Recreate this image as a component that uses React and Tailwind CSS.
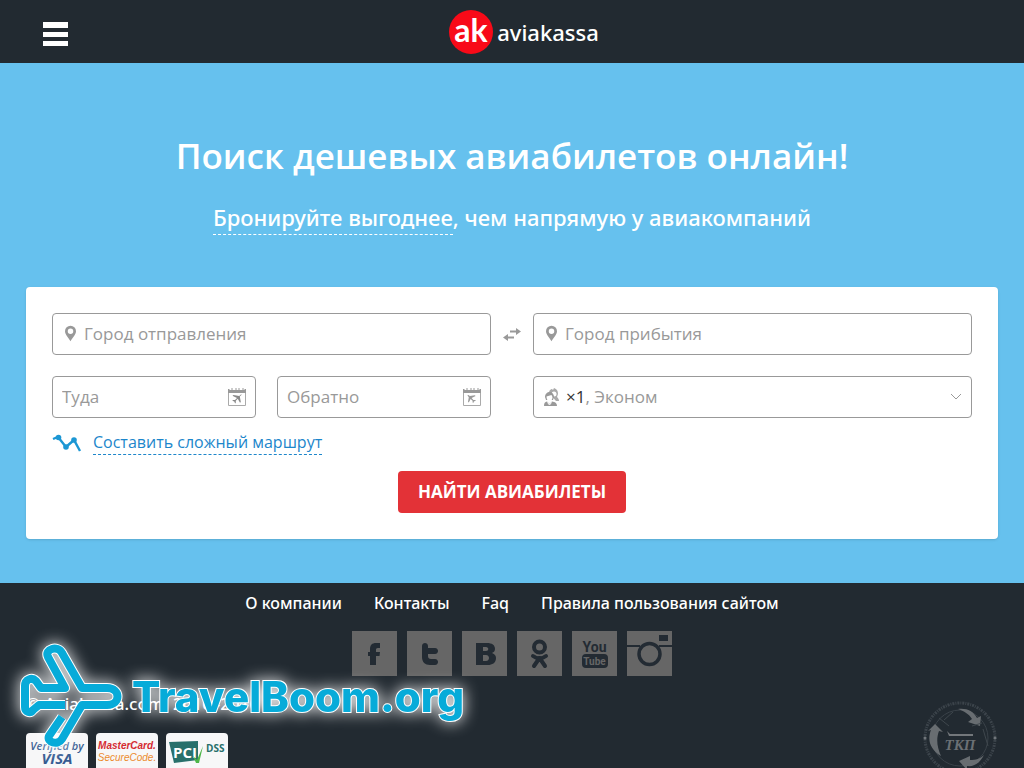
import { useState } from 'react'

const menu = ['О компании', 'Контакты', 'Faq', 'Правила пользования сайтом']

function PinIcon() {
  return (
    <svg width="11" height="18" viewBox="0 0 12 18" className="shrink-0" aria-hidden="true">
      <path fill="#999" fillRule="evenodd" d="M6 0a6 6 0 0 0-6 6c0 4 4 7 6 11 2-4 6-7 6-11a6 6 0 0 0-6-6zm0 3a3 3 0 1 1 0 6 3 3 0 0 1 0-6z" />
    </svg>
  )
}

function CalendarIcon({ back }) {
  return (
    <svg width="18" height="18" viewBox="0 0 18 18" className="shrink-0" aria-hidden="true">
      <path d="M.5 2v15.500h17V2" fill="none" stroke="#aaa" />
      <path d="M0 1h1.500v1h2V0h1v2h3V0h1v2h2V0h1v2h3V0h1v2h1V1H18v4H0z" fill="#999" />
      {back ? (
        <path d="M4.500 7c.8-.3 1.500 0 2.300 1l5-.7.800.7-4 2 1.800 2h2l.5.600-2 .8-.6 1.600-.7-.6v-1.700l-2-1.700-1.800 3.400-.8-.7.8-4.500C5 8.300 4.600 7.600 4.500 7z" fill="#999" />
      ) : (
        <path d="M13.800 6.500c-.8-.3-1.500.3-2.600 1.500L5.500 7l-1 .8L9 10l-2 2H5l-.7.700 2 .8.800 2 .7-.7v-2l2-2 2.200 4 .8-.8-1-5.500c1.200-1.100 1.800-1.500 2-2z" fill="#888" />
      )}
    </svg>
  )
}

function SwapIcon() {
  return (
    <svg width="18" height="15" viewBox="0 0 18 15" aria-hidden="true">
      <path d="M7 4.500h8M11 10.500H3" stroke="#999" strokeWidth="2" />
      <path d="M13 1l5 3.500L13 8zM5 7L0 10.500 5 14z" fill="#999" />
    </svg>
  )
}

function PeopleIcon() {
  return (
    <svg width="15" height="18" viewBox="0 0 15 18" className="shrink-0" aria-hidden="true">
      <path d="M5 5C5 2 7 1 8 1l1 1 1-2c3 1 4 3 4 6l-1 3c1 1 2 2 2 4h-3" fill="#aaa" />
      <circle cx="10" cy="6" r="2.500" fill="#fff" />
      <path d="M1 9c0-3 2-5 5-5 2 0 4 2 4 5l-1 3H2z" fill="#999" />
      <path d="M2.500 8.500l5-1.500 1 2c0 2-1 4-3 4s-3-2-3-4.500z" fill="#fff" />
      <path d="M0 18c0-3 1-4 3-4.500l2.500 2.500L8 13.500c3 .5 5 1.500 5 4.500z" fill="#999" />
      <path d="M3.500 14.500L5.500 17l2-2.500" fill="none" stroke="#fff" />
    </svg>
  )
}

function RouteIcon() {
  return (
    <svg width="30" height="18" viewBox="0 0 30 18" className="shrink-0" aria-hidden="true">
      <path d="M1 5l5-2 8 10 8-7 6 11" fill="none" stroke="#1c97d4" strokeWidth="2.400" />
      <circle cx="6.500" cy="3.500" r="2.800" fill="#1c97d4" />
      <circle cx="14" cy="13" r="2.800" fill="#1c97d4" />
      <circle cx="22" cy="6" r="2.800" fill="#1c97d4" />
    </svg>
  )
}

function Field({ label, icon, after }) {
  return (
    <label className="flex h-[42px] min-w-0 items-center gap-2 rounded border border-[#999] bg-white px-[9px]">
      {icon && <span className="pl-[3px]">{icon}</span>}
      <input
        type="text"
        aria-label={label}
        placeholder={label}
        className="w-full min-w-0 bg-transparent text-[17px] leading-6 text-[#333] outline-none placeholder:text-[#999]"
      />
      {after}
    </label>
  )
}

const socials = [
  { name: 'Facebook', art: <path d="M18 34V25h-2v-4h2v-3c0-4 2-6 6-6h4v5h-2c-2 0-2 1-2 2v2h4l-.5 4H24v9z" /> },
  { name: 'Twitter', art: <path d="M15 15c0-4 6-4 6 0v2h7c4 0 4 6 0 6h-7v2c0 2 1 3 3 3h4c4 0 4 6 0 6h-5c-5 0-8-3-8-8z" /> },
  { name: 'ВКонтакте', art: <path fillRule="evenodd" d="M14 12h11c5 0 8 2 8 6 0 2-1 3-3 4 3 1 4 3 4 5 0 5-4 7-8 7H14zm7 4v4h3c3 0 3-4 0-4zm0 8v6h3c4 0 4-6 0-6z" /> },
  {
    name: 'Одноклассники',
    art: (
      <g fill="none" stroke="#232b33" strokeWidth="4" strokeLinecap="round">
        <circle cx="22.500" cy="16" r="5.500" />
        <path d="M16 25c4 3 9 3 13 0M22.500 27L17 35M22.500 27l5.500 8" />
      </g>
    ),
  },
  {
    name: 'YouTube',
    art: (
      <>
        <text x="22.500" y="21" textAnchor="middle" fontSize="14" fontWeight="700">You</text>
        <rect x="10" y="23" width="26" height="14" rx="4" />
        <text x="22.500" y="34" textAnchor="middle" fontSize="10" fontWeight="700" fill="#666">Tube</text>
      </>
    ),
  },
  {
    name: 'Instagram',
    art: (
      <>
        <path d="M0 14h13v2H0zM32 14h13v2H32zM32 4h9v6h-9z" />
        <circle cx="22.500" cy="23" r="10.500" fill="none" stroke="#232b33" strokeWidth="3.500" />
      </>
    ),
  },
]

function TkpStamp() {
  return (
    <svg width="76" height="76" viewBox="0 0 76 76" role="img" aria-label="ТКП">
      <circle cx="38" cy="38" r="35" fill="none" stroke="#3c444b" strokeWidth="3" strokeDasharray="1 1 2 1" />
      <circle cx="38" cy="38" r="28" fill="none" stroke="#3a4249" />
      <path d="M36 9c9-1 15 2 19 9l4-2-1 10-12-4 4-3c-3-5-8-8-14-10zM19 56C8 49 5 40 9 30l-3 1 7-7 8 8-4-1c-3 8-2 16 2 25zM62 55c-4 8-10 12-17 11v4l-8-9 11-5v4c6 0 10-1 14-5z" fill="#686d71" />
      <path d="M25 31l3 3h23v2H27z" fill="#73777b" />
      <path d="M22 20l9-8M61 29l5 17M17 18l10 8M50 26l10-3" fill="none" stroke="#3f474d" />
      <text x="38" y="50" textAnchor="middle" fontSize="15" fontWeight="700" fontStyle="italic" fill="#6b7074" className="font-['Liberation_Serif',serif]">ТКП</text>
      <circle cx="3" cy="38" r="1.500" fill="#70757a" />
      <circle cx="73" cy="38" r="1.500" fill="#70757a" />
    </svg>
  )
}

const planePath =
  'M65 75 L39 75 L33 80 C30 84 25 82 25 77 L25 56 C25 49 32 47 36 51 L41 58 L65 58 L48 27 C44 19 58 15 62 23 L82 58 L107 58 C121 58 121 75 107 75 L82 75 L62 109 C58 116 46 112 49 106 L62 87'

function Watermark() {
  return (
    <div className="pointer-events-none absolute left-0 top-[47px] flex items-center">
      <svg width="132" height="134" viewBox="0 0 132 134" className="overflow-visible drop-shadow-[0_0_8px_#ffffff]" aria-hidden="true">
        <path d={planePath} fill="none" stroke="#fff" strokeWidth="10" strokeLinejoin="round" />
        <path d={planePath} fill="none" stroke="#07abd9" strokeWidth="8" strokeLinejoin="round" />
      </svg>
      <span className="font-['Inter',sans-serif] text-[42px] font-extrabold leading-[52px] text-[#07abd9] drop-shadow-[0_0_8px_#ffffff] [-webkit-text-stroke:2px_#ffffff] [paint-order:stroke_fill]">
        TravelBoom.org
      </span>
    </div>
  )
}

export default function App() {
  const [open, setOpen] = useState(false)

  return (
    <div className="flex min-h-screen flex-col bg-[#222a31] font-['Open_Sans','Noto_Sans',sans-serif]">
      <header className="relative flex h-[63px] items-center justify-center bg-[#222a31]">
        <button
          type="button"
          aria-label="Меню"
          aria-expanded={open}
          onClick={() => setOpen(!open)}
          className="absolute left-[43px] top-[22px] flex flex-col gap-1"
        >
          <span className="h-[6px] w-[25px] bg-white" />
          <span className="h-[5px] w-[25px] bg-white" />
          <span className="h-[5px] w-[25px] bg-white" />
        </button>
        <a href="#" className="flex items-center gap-1 pl-6 text-white">
          <svg width="44" height="44" viewBox="0 0 44 44" aria-hidden="true">
            <circle cx="22" cy="22" r="22" fill="#f80a18" />
            <text x="22" y="32" textAnchor="middle" fontSize="32" fontWeight="700" fill="#fff" className="font-['Lato',sans-serif]">ak</text>
          </svg>
          <span className="font-['Noto_Sans',sans-serif] text-[22px] font-medium leading-8">aviakassa</span>
        </a>
      </header>

      <main className="bg-[#66c1ee] px-[26px] pb-11 pt-[68px] text-white">
        <h1 className="text-center text-[35px] font-semibold leading-[50px]">Поиск дешевых авиабилетов онлайн!</h1>
        <p className="mt-[19px] text-center font-['Noto_Sans',sans-serif] text-[22px] font-medium leading-[34px]">
          <a href="#" className="inline-block border-b border-dashed border-white">Бронируйте выгоднее</a>, чем напрямую у авиакомпаний
        </p>

        <form onSubmit={e => e.preventDefault()} className="mt-[52px] rounded bg-white p-[26px] shadow-sm">
          <div className="grid grid-cols-[1fr_42px_1fr] gap-y-[21px]">
            <Field label="Город отправления" icon={<PinIcon />} />
            <button type="button" aria-label="Поменять города местами" className="flex items-center justify-center">
              <SwapIcon />
            </button>
            <Field label="Город прибытия" icon={<PinIcon />} />
            <div className="grid grid-cols-[204fr_214fr] gap-[21px]">
              <Field label="Туда" after={<CalendarIcon />} />
              <Field label="Обратно" after={<CalendarIcon back />} />
            </div>
            <button
              type="button"
              className="col-start-3 flex h-[42px] items-center rounded border border-[#999] px-[10px] text-left text-[17px] text-[#999]"
            >
              <PeopleIcon />
              <span className="ml-[7px] flex-1"><span className="text-[#333]">×1</span>, Эконом</span>
              <svg width="10" height="6" viewBox="0 0 10 6" aria-hidden="true">
                <path d="M0 0l5 5 5-5" fill="none" stroke="#999" />
              </svg>
            </button>
          </div>
          <div className="mt-[13px] flex items-center gap-[11px]">
            <RouteIcon />
            <a href="#" className="border-b border-dashed border-[#1c86cb] text-[16px] leading-[23px] text-[#1c86cb]">Составить сложный маршрут</a>
          </div>
          <div className="mt-4 flex justify-center">
            <button type="submit" className="h-[42px] rounded bg-[#e33237] px-5 text-[17px] font-bold text-white">
              НАЙТИ АВИАБИЛЕТЫ
            </button>
          </div>
        </form>
      </main>

      <footer className="relative overflow-hidden bg-[#222a31] px-[26px] pb-4 text-white">
        <nav className="flex justify-center gap-8 pt-2 font-['Noto_Sans',sans-serif] text-[16px] font-medium leading-6">
          {menu.map(item => (
            <a key={item} href="#">{item}</a>
          ))}
        </nav>
        <div className="mt-4 flex justify-center gap-[10px]">
          {socials.map(s => (
            <a key={s.name} href="#" aria-label={s.name} className="bg-[#666]">
              <svg width="45" height="45" viewBox="0 0 45 45" fill="#232b33" className="font-['Roboto',sans-serif]">
                {s.art}
              </svg>
            </a>
          ))}
        </div>

        <div className="mt-4 flex items-start justify-between">
          <div>
            <p className="font-['Noto_Sans',sans-serif] text-[17px] font-medium leading-6">© Aviakassa.com, 2010–2016</p>
            <div className="mt-[17px] flex gap-2 text-center italic">
              <div className="h-11 w-[62px] rounded-sm bg-[#f7f7f8] pt-[6px] text-[11px] font-semibold leading-[13px] text-[#345a91]">
                <p className="whitespace-nowrap">Verified by</p>
                <p className="text-[15px] font-bold">VISA</p>
              </div>
              <div className="h-11 w-[62px] rounded-sm bg-[#f7f7f8] pt-[7px] font-['Liberation_Sans',sans-serif] text-[10px] font-bold leading-[12px]">
                <p className="text-[#d52b31]">MasterCard.</p>
                <p className="font-normal text-[#ec8a2c]">SecureCode.</p>
              </div>
              <div className="flex h-11 w-[62px] items-start gap-[2px] rounded-sm bg-[#f7f7f8] px-[3px] pt-2 font-bold not-italic">
                <svg width="35" height="24" viewBox="0 0 35 24">
                  <path d="M0 1l29-1v19l-24 3z" fill="#28706b" />
                  <text x="4" y="17" fontSize="15" fill="#fff">PCI</text>
                  <path d="M24 15l4 4 6-14-4 17h-3z" fill="#4eb648" />
                </svg>
                <span className="text-[10px] leading-[14px] text-[#28706b]">DSS</span>
              </div>
            </div>
          </div>
          <div className="mt-2">
            <TkpStamp />
          </div>
        </div>
        <Watermark />
      </footer>
    </div>
  )
}
